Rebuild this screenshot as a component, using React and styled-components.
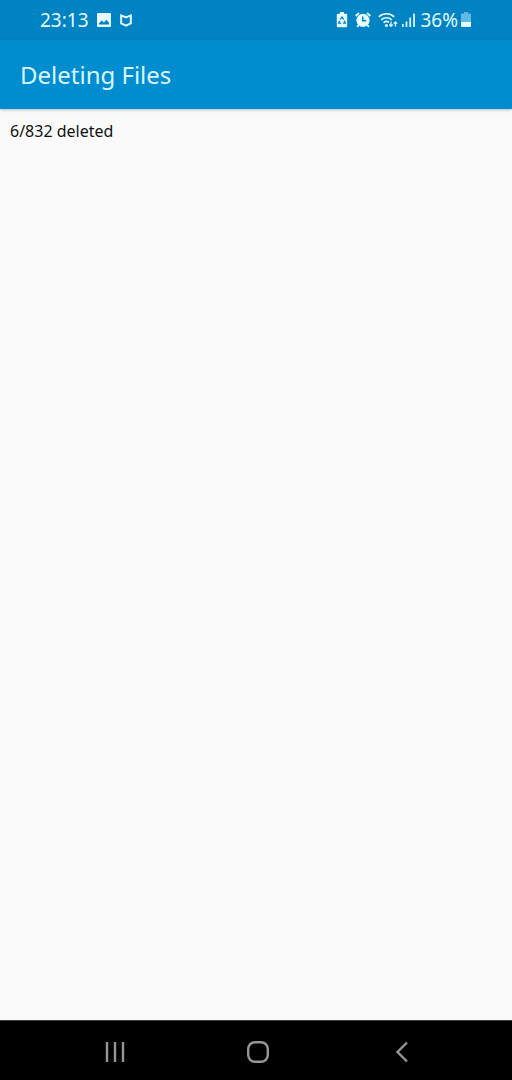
import styled, { createGlobalStyle } from 'styled-components';

const GlobalStyle = createGlobalStyle`
  * {
    box-sizing: border-box;
  }
  body {
    margin: 0;
    background: #fafafa;
    font-family: 'Noto Sans', sans-serif;
  }
`;

const Screen = styled.div`
  min-height: 100vh;
  display: flex;
  flex-direction: column;
`;

const StatusBar = styled.div`
  height: 40px;
  padding: 0 40px;
  display: flex;
  align-items: center;
  justify-content: space-between;
  background: #0083c3;
  color: #e4fbff;
  font-size: 19px;
  line-height: 24px;
`;

const Group = styled.div`
  display: flex;
  align-items: center;
  gap: ${({ $gap }) => $gap}px;
`;

const Icon = styled.svg`
  display: block;
  flex: none;
`;

const AppBar = styled.header`
  height: 69px;
  padding: 0 20px;
  display: flex;
  align-items: center;
  background: #008dd0;
  box-shadow: 0 1px 3px rgba(0, 0, 0, 0.25);
`;

const Title = styled.h1`
  margin: 0;
  color: #d8f6ff;
  font-size: 24px;
  line-height: 32px;
  font-weight: 400;
`;

const Content = styled.main`
  flex: 1;
  padding: 10px;
`;

const Progress = styled.p`
  margin: 0;
  color: #111;
  font-size: 16px;
  line-height: 24px;
`;

const NavBar = styled.nav`
  height: 60px;
  padding: 2px 87px 0 91px;
  display: flex;
  align-items: center;
  justify-content: space-between;
  background: #000;
  border-top: 1px solid #3a3d40;
`;

const NavButton = styled.button`
  width: 48px;
  height: 48px;
  padding: 0;
  display: flex;
  align-items: center;
  justify-content: center;
  border: 0;
  background: none;
  color: #969696;
`;

function PictureIcon() {
  return (
    <Icon width="14" height="14" viewBox="0 0 14 14">
      <path
        fill="currentColor"
        fillRule="evenodd"
        d="M1 0h12a1 1 0 0 1 1 1v12a1 1 0 0 1-1 1H1a1 1 0 0 1-1-1V1a1 1 0 0 1 1-1zM2 11.4h10V9.8L9.4 6.8 7 9.6 4.8 7.6 2 10.2z"
      />
    </Icon>
  );
}

function ShieldIcon() {
  return (
    <Icon width="14" height="14" viewBox="0 0 14 14">
      <path
        fill="none"
        stroke="currentColor"
        strokeWidth="2"
        d="M2.2 2.4v8L7 12.6l4.8-2.2v-8L7 4.4z"
      />
    </Icon>
  );
}

function BatterySaverIcon() {
  return (
    <Icon width="12" height="16" viewBox="0 0 12 16">
      <path
        fill="currentColor"
        d="M4 0h4v1.8h2a1.2 1.2 0 0 1 1.2 1.2v11a1.2 1.2 0 0 1-1.2 1.2H2A1.2 1.2 0 0 1 .8 14V3A1.2 1.2 0 0 1 2 1.8h2z"
      />
      <g fill="none" stroke="#0083c3" strokeWidth="1.3">
        <path d="M4.3 7.4 6 5l1.7 2.4" />
        <path d="m8.3 8.7 1 2.5H7" />
        <path d="M5.2 11.2H2.7l1-2.5" />
      </g>
    </Icon>
  );
}

function AlarmIcon() {
  return (
    <Icon width="16" height="16" viewBox="0 0 16 16">
      <circle cx="8" cy="8.3" r="6.6" fill="currentColor" />
      <path
        d="M.6 4 4 1M15.4 4 12 1M3.9 12.8 2 14.8M12.1 12.8l1.9 2"
        stroke="currentColor"
        strokeWidth="1.8"
      />
      <path d="M7.8 4.6v4.2h3.4" fill="none" stroke="#0083c3" strokeWidth="1.5" />
    </Icon>
  );
}

function WifiIcon() {
  return (
    <Icon width="20" height="16" viewBox="0 0 20 16">
      <g fill="none" stroke="currentColor" strokeWidth="1.6">
        <path d="M.8 4.8a11.3 11.3 0 0 1 15.4 0" />
        <path d="M3.2 7.8a7.8 7.8 0 0 1 10.6 0" />
        <path d="M5.6 10.7a4.4 4.4 0 0 1 5.4-.4" />
      </g>
      <circle cx="8.4" cy="13.4" r="1.5" fill="currentColor" />
      <path
        d="M13 9.6v4.6M11.3 12.5l1.7 1.8 1.7-1.8M17.4 14.6V10M15.7 11.7l1.7-1.8 1.7 1.8"
        fill="none"
        stroke="currentColor"
        strokeWidth="1.2"
      />
    </Icon>
  );
}

function SignalIcon() {
  return (
    <Icon width="14" height="14" viewBox="0 0 14 14">
      <path
        d="M.8 14v-3M4.5 14V8.5M8.2 14V4.5M12 14V.5"
        stroke="currentColor"
        strokeWidth="1.7"
      />
    </Icon>
  );
}

function BatteryIcon() {
  return (
    <Icon width="12" height="16" viewBox="0 0 12 16">
      <path fill="#62b9e2" d="M4 0h4v1.5h3V10H1V1.5h3z" />
      <path fill="currentColor" d="M1 10h10v4a1 1 0 0 1-1 1H2a1 1 0 0 1-1-1z" />
    </Icon>
  );
}

function App() {
  return (
    <>
      <GlobalStyle />
      <Screen>
        <StatusBar>
          <Group $gap={8}>
            <span>23:13</span>
            <PictureIcon />
            <ShieldIcon />
          </Group>
          <Group $gap={2}>
            <Group $gap={4}>
              <Group $gap={7}>
                <BatterySaverIcon />
                <AlarmIcon />
                <WifiIcon />
              </Group>
              <SignalIcon />
              <span>36%</span>
            </Group>
            <BatteryIcon />
          </Group>
        </StatusBar>
        <AppBar>
          <Title>Deleting Files</Title>
        </AppBar>
        <Content>
          <Progress>6/832 deleted</Progress>
        </Content>
        <NavBar>
          <NavButton type="button" aria-label="Recent apps">
            <Icon width="22" height="22" viewBox="0 0 22 22">
              <path d="M3 1v20M11 1v20M19 1v20" stroke="currentColor" strokeWidth="2.4" />
            </Icon>
          </NavButton>
          <NavButton type="button" aria-label="Home">
            <Icon width="22" height="22" viewBox="0 0 22 22">
              <rect
                x="1.2"
                y="1.2"
                width="19.6"
                height="19.6"
                rx="6.8"
                fill="none"
                stroke="currentColor"
                strokeWidth="2.4"
              />
            </Icon>
          </NavButton>
          <NavButton type="button" aria-label="Back">
            <Icon width="22" height="22" viewBox="0 0 22 22">
              <path d="m17 1.5-9.5 9.5 9.5 9.5" fill="none" stroke="currentColor" strokeWidth="2.4" />
            </Icon>
          </NavButton>
        </NavBar>
      </Screen>
    </>
  );
}

export default App;
